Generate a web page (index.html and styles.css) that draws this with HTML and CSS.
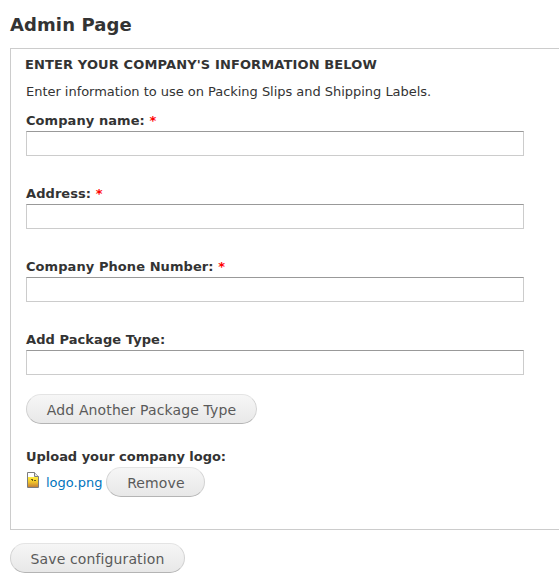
FILE: index.html
```html
<!DOCTYPE html>
<html lang="en">
<head>
<meta charset="utf-8">
<title>Admin Page</title>
<link rel="stylesheet" href="styles.css">
</head>
<body>
<h1 class="page-title">Admin Page</h1>
<form class="config-form">
  <section class="panel">
    <h2 class="panel-title">ENTER YOUR COMPANY'S INFORMATION BELOW</h2>
    <p class="panel-desc">Enter information to use on Packing Slips and Shipping Labels.</p>
    <div class="field">
      <label class="field-label">Company name: <span class="req">*</span></label>
      <input class="text-input" type="text">
    </div>
    <div class="field">
      <label class="field-label">Address: <span class="req">*</span></label>
      <input class="text-input" type="text">
    </div>
    <div class="field">
      <label class="field-label">Company Phone Number: <span class="req">*</span></label>
      <input class="text-input" type="text">
    </div>
    <div class="field field-last">
      <label class="field-label">Add Package Type:</label>
      <input class="text-input" type="text">
    </div>
    <button class="btn add-btn" type="button">Add Another Package Type</button>
    <div class="upload">
      <label class="field-label upload-label">Upload your company logo:</label>
      <div class="file-row">
        <svg class="file-icon" width="14" height="16" viewBox="0 0 14 16" aria-hidden="true">
          <defs>
            <linearGradient id="fill" x1="0" y1="0" x2="0" y2="1">
              <stop offset="0" stop-color="#ffee40"/>
              <stop offset="0.5" stop-color="#f2c52a"/>
              <stop offset="1" stop-color="#c47f35"/>
            </linearGradient>
          </defs>
          <path d="M1.5 0.5H8.5L12.5 4.5V15.5H1.5Z" fill="#fff" stroke="#7d7d7d"/>
          <path d="M8.5 0.5V4.5H12.5" fill="#e6e6e6" stroke="#7d7d7d"/>
          <rect x="2" y="5" width="10" height="10" fill="url(#fill)"/>
          <path d="M5 7.5H7M8 8.5H10M6 8.5H7" stroke="#6b5a12" stroke-width="1"/>
        </svg>
        <a class="file-link" href="#">logo.png</a>
        <button class="btn remove-btn" type="button">Remove</button>
      </div>
    </div>
  </section>
  <button class="btn save-btn" type="button">Save configuration</button>
</form>
</body>
</html>
```
FILE: styles.css
```css
html, body {
  margin: 0;
  padding: 0;
  background: #fff;
  overflow: hidden;
}
body {
  font-family: "DejaVu Sans", sans-serif;
  font-size: 13px;
  line-height: 18px;
  color: #333;
  padding: 0 0 0 10px;
  height: 588px;
  box-sizing: border-box;
}
.page-title {
  margin: 0;
  padding-top: 14px;
  font-size: 18px;
  line-height: 22px;
  font-weight: bold;
  color: #333;
  height: 34px;
  letter-spacing: 0.1px;
}
.panel {
  box-sizing: border-box;
  height: 482px;
  border: 1px solid #ccc;
  border-right: 0;
  padding: 7px 15px 0 15px;
}
.panel-title {
  margin: 0 0 0 -1px;
  font-size: 13px;
  line-height: 18px;
  font-weight: bold;
  color: #333;
  letter-spacing: 0.13px;
}
.panel-desc {
  margin: 9px 0 0;
  letter-spacing: -0.03px;
}
.field {
  margin-top: 11px;
  height: 63px;
}
.field + .field {
  margin-top: 10px;
}
.field-last {
  height: 44px;
}
.field-label {
  display: block;
  font-weight: bold;
  height: 16px;
  line-height: 18px;
  letter-spacing: 0.07px;
}
.upload-label {
  letter-spacing: -0.03px;
}
.req {
  color: #f00;
}
.text-input {
  display: block;
  box-sizing: border-box;
  width: 498px;
  height: 25px;
  margin: 3px 0 0;
  padding: 0 4px;
  border: 1px solid #ccc;
  border-top-color: #999;
  border-radius: 0;
  background: #fff;
  outline: 0;
}
.btn {
  box-sizing: border-box;
  height: 30px;
  padding: 1px 0 0;
  border: 1px solid #e4e4e4;
  border-bottom-color: #b4b4b4;
  border-left-color: #d2d2d2;
  border-right-color: #d2d2d2;
  border-radius: 20px;
  background: linear-gradient(#f6f6f6, #e8e8e8);
  color: #5a5a5a;
  font-family: "DejaVu Sans", sans-serif;
  font-size: 14px;
  line-height: 18px;
  letter-spacing: 0.12px;
  cursor: pointer;
}
.add-btn {
  display: block;
  margin-top: 19px;
  width: 231px;
}
.upload {
  margin-top: 24px;
}
.file-row {
  display: flex;
  align-items: center;
  margin-top: 3px;
  height: 30px;
}
.file-icon {
  flex: none;
  margin: -5px 6px 0 0;
}
.file-link {
  color: #0074bd;
  text-decoration: none;
  margin: 2px 4px 0 0;
}
.remove-btn {
  width: 99px;
}
.save-btn {
  display: block;
  margin-top: 13px;
  width: 175px;
}
```
